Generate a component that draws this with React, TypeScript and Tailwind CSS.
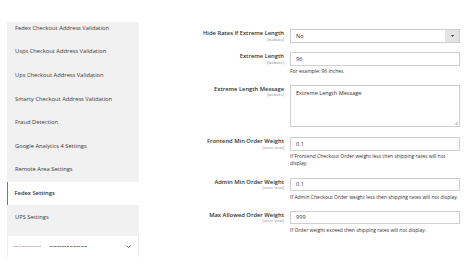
import type { ReactNode } from 'react';

const navItems = [
    'Fedex Checkout Address Validation',
    'Usps Checkout Address Validation',
    'Ups Checkout Address Validation',
    'Smarty Checkout Address Validation',
    'Fraud Detection',
    'Google Analytics 4 Settings',
    'Remote Area Settings',
    'Fedex Settings',
    'UPS Settings',
];

type FieldProps = {
    top: string;
    label: string;
    scope: string;
    note?: ReactNode;
    children: ReactNode;
};

function Field({ top, label, scope, note, children }: FieldProps) {
    return (
        <div className={`flex items-start ${top}`}>
            <div className="w-[125px] pt-[1px] pr-[1px] text-right">
                <p className="text-[5.8px] leading-[7px] font-semibold text-[#303030]">
                    {label}
                </p>
                <p className="-mt-[0.5px] text-[4px] leading-[5px] text-[#8a8a8a]">
                    {scope}
                </p>
            </div>
            <div className="ml-[5px] w-[170px]">
                {children}
                {note && (
                    <p className="mt-[2.5px] text-[5px] leading-[7px] text-[#303030]">
                        {note}
                    </p>
                )}
            </div>
        </div>
    );
}

function TextInput({ value }: { value: string }) {
    return (
        <div className="flex h-[13.5px] items-center border border-[#cfcfcf] bg-white px-[5px] text-[5.6px] text-[#303030]">
            {value}
        </div>
    );
}

export default function App() {
    return (
        <div className="flex h-[278px] w-[474px] overflow-hidden bg-white font-['Open_Sans',sans-serif]">
            <aside className="ml-[7px] w-[132px]">
                <div className="mt-[22px] overflow-hidden bg-[#f1f1f1] pb-[7px]">
                    <div className="-mt-[5.6px]">
                        {navItems.map((item) =>
                            item === 'Fedex Settings' ? (
                                <div
                                    key={item}
                                    className="flex h-[23.6px] items-center border-l-[1.5px] border-[#eb5202] bg-white pl-[6.5px] text-[5.75px] font-semibold text-[#303030]"
                                >
                                    {item}
                                </div>
                            ) : (
                                <div
                                    key={item}
                                    className="flex h-[23.6px] items-center pl-[8px] text-[5.75px] text-[#41362f]"
                                >
                                    {item}
                                </div>
                            ),
                        )}
                    </div>
                </div>
                <div className="flex h-[21px] items-center justify-between border-x border-[#ececec] pt-[1px] pr-[7px] pl-[5px]">
                    <p className="origin-center scale-y-[0.3] text-[5.4px] leading-[7px] font-bold tracking-wide text-[#41362f] uppercase">
                        <span className="text-[#9a9a9a]">Magento</span>
                        <span className="ml-[8px]">Connectors</span>
                    </p>
                    <svg width="5" height="3" viewBox="0 0 5 3">
                        <path
                            d="M0.5 0.5 L2.5 2.5 L4.5 0.5"
                            fill="none"
                            stroke="#514943"
                            strokeWidth="0.8"
                        />
                    </svg>
                </div>
            </aside>

            <main className="ml-[21px] flex flex-col">
                <Field top="mt-[29px]" label="Hide Rates if Extreme Length" scope="[website]">
                    <div className="flex h-[14px] items-stretch border border-[#cfcfcf] bg-white">
                        <div className="flex flex-1 items-center px-[5px] text-[5.6px] text-[#303030]">
                            No
                        </div>
                        <div className="flex w-[14px] items-center justify-center bg-[#e3e3e3]">
                            <svg width="3" height="2" viewBox="0 0 3 2">
                                <path d="M0 0 L3 0 L1.5 2 Z" fill="#303030" />
                            </svg>
                        </div>
                    </div>
                </Field>

                <Field
                    top="mt-[9px]"
                    label="Extreme Length"
                    scope="[website]"
                    note="For example: 96 inches"
                >
                    <TextInput value="96" />
                </Field>

                <Field top="mt-[9.5px]" label="Extreme Length Message" scope="[website]">
                    <div className="relative h-[42px] border border-[#cfcfcf] bg-white px-[5px] pt-[3px] text-[5.6px] text-[#303030]">
                        Extreme Length Message
                        <svg
                            className="absolute right-[1px] bottom-[1px]"
                            width="4"
                            height="4"
                            viewBox="0 0 4 4"
                        >
                            <path
                                d="M4 0.5 L0.5 4 M4 2.2 L2.2 4"
                                stroke="#888"
                                strokeWidth="0.6"
                            />
                        </svg>
                    </div>
                </Field>

                <Field
                    top="mt-[10.5px]"
                    label="Frontend Min Order Weight"
                    scope="[store view]"
                    note="If Frontend Checkout Order weight less then shipping rates will not display."
                >
                    <TextInput value="0.1" />
                </Field>

                <Field
                    top="mt-[10.5px]"
                    label="Admin Min Order Weight"
                    scope="[store view]"
                    note="If Admin Checkout Order weight less then shipping rates will not display."
                >
                    <TextInput value="0.1" />
                </Field>

                <Field
                    top="mt-[10px]"
                    label="Max Allowed Order Weight"
                    scope="[store view]"
                    note="If Order weight exceed then shipping rates will not display."
                >
                    <TextInput value="999" />
                </Field>
            </main>
        </div>
    );
}
